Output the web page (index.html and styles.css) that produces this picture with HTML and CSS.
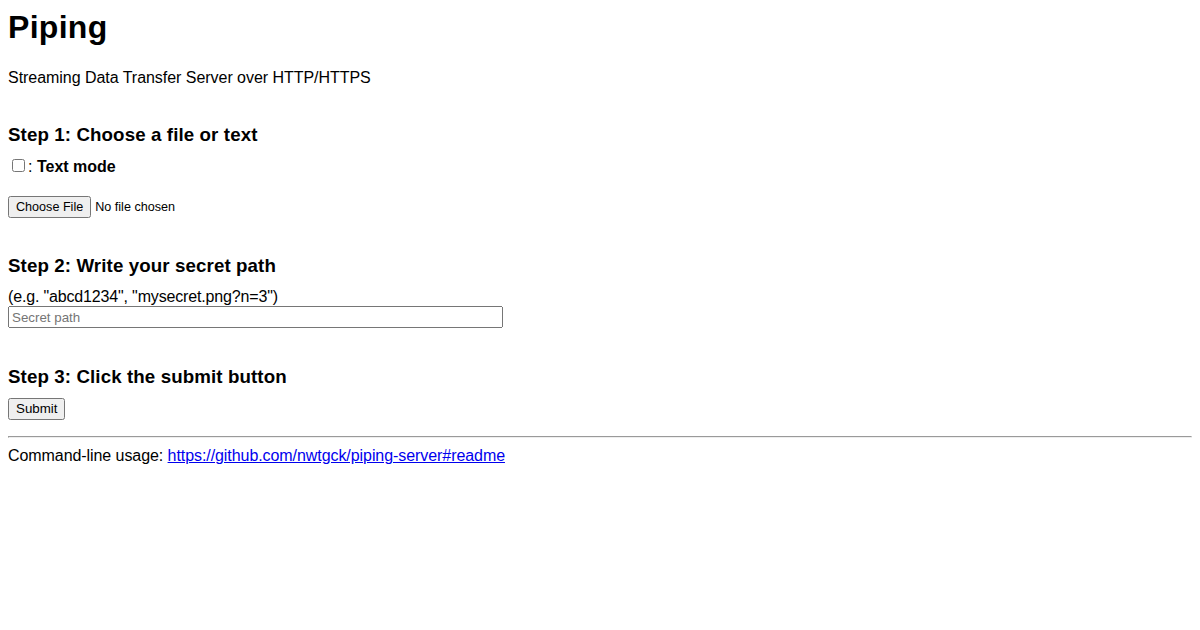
FILE: index.html
```html
<!DOCTYPE html>
<html>
<head>
<meta charset="utf-8">
<title>Piping</title>
<link rel="stylesheet" href="styles.css">
</head>
<body class="page">
<h1 class="title">Piping</h1>
<span class="lead">Streaming Data Transfer Server over HTTP/HTTPS</span>
<h3 class="step">Step 1: Choose a file or text</h3>
<input type="checkbox" class="mode-check" id="text_mode">: <b>Text mode</b><br>
<br class="gap">
<input type="file" class="file-input" id="file_input"><br>
<h3 class="step">Step 2: Write your secret path</h3>
<span class="example">(e.g. "abcd1234", "mysecret.png?n=3")</span><br>
<input class="secret" id="secret_path" placeholder="Secret path"><br>
<h3 class="step">Step 3: Click the submit button</h3>
<button class="submit">Submit</button><br>
<hr class="rule">
<span class="usage">Command-line usage: <a class="link" href="https://github.com/nwtgck/piping-server#readme">https://github.com/nwtgck/piping-server#readme</a></span><br>
</body>
</html>
```

FILE: styles.css
```css
.page {
  margin: 8px;
  font-family: "Liberation Sans", Arial, sans-serif;
  font-size: 16px;
  line-height: 1.2;
  color: #000;
  background: #fff;
}
.title {
  margin-top: 0;
  letter-spacing: 0.3px;
}
.lead {
  letter-spacing: -0.04px;
}
.step {
  margin-top: 2em;
  margin-bottom: 0.5em;
  letter-spacing: 0.11px;
}
.example {
  letter-spacing: -0.16px;
}
.usage {
  letter-spacing: -0.07px;
}
.file-input {
  font-family: "Liberation Sans", Arial, sans-serif;
  font-size: 12.6px;
}
.file-input::file-selector-button {
  padding: 2px 6px 2px;
}
.secret {
  box-sizing: border-box;
  width: 495px;
  height: 22px;
  font-family: "Liberation Sans", Arial, sans-serif;
  font-size: 13.333px;
}
.submit {
  font-family: "Liberation Sans", Arial, sans-serif;
  font-size: 13.333px;
  padding: 1px 6px 2px;
  margin-top: 1px;
}
.rule {
  margin-top: 16px;
}
.link {
  color: #0000ee;
}
```
